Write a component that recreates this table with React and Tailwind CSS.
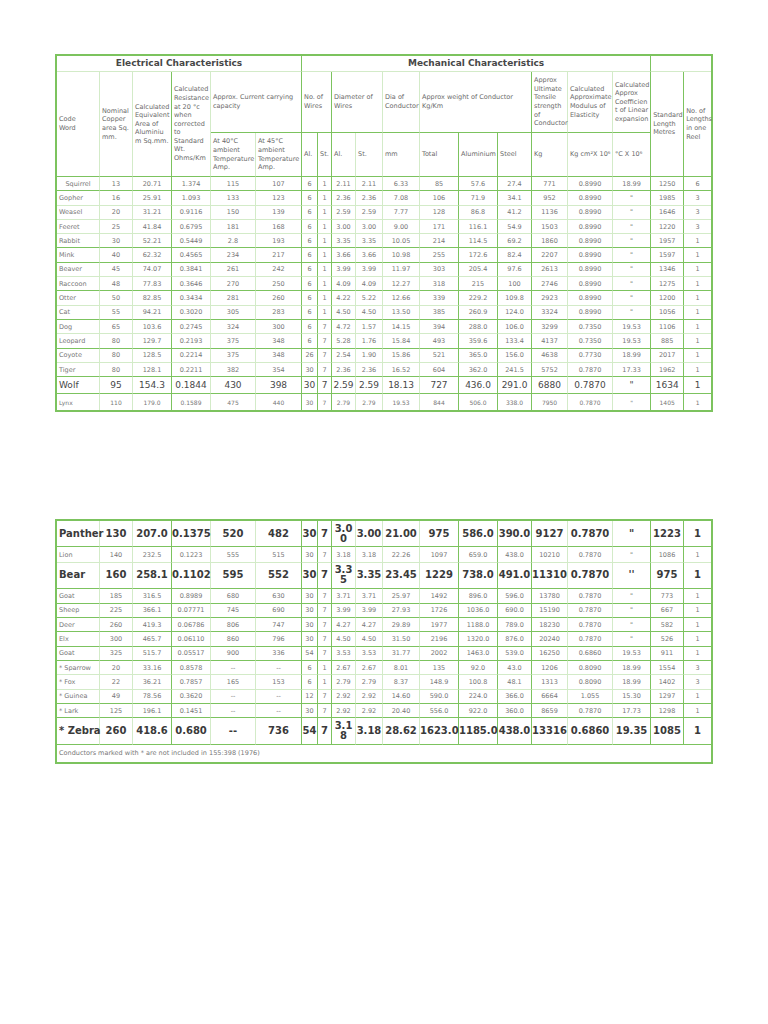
import React from "react";

const DARK_R = new Set([2, 5, 6, 7, 11, 12, 13, 16, 17]);
const WIDTHS = [43, 33, 39, 39, 45, 46, 16, 14, 24, 27, 37, 39, 39, 34, 36, 45, 38, 33, 27];

function bc(lastCol, bottom) {
  let c = "";
  if (lastCol !== 18) {
    c += DARK_R.has(lastCol) ? " border-r border-r-[#7cc35e]" : " border-r border-r-[#d3ebc8]";
  }
  if (bottom === "dark") c += " border-b border-b-[#7cc35e]";
  else if (bottom === "light") c += " border-b border-b-[#d3ebc8]";
  return c;
}

const topRows = [
  ["Squirrel", "13", "20.71", "1.374", "115", "107", "6", "1", "2.11", "2.11", "6.33", "85", "57.6", "27.4", "771", "0.8990", "18.99", "1250", "6"],
  ["Gopher", "16", "25.91", "1.093", "133", "123", "6", "1", "2.36", "2.36", "7.08", "106", "71.9", "34.1", "952", "0.8990", "\"", "1985", "3"],
  ["Weasel", "20", "31.21", "0.9116", "150", "139", "6", "1", "2.59", "2.59", "7.77", "128", "86.8", "41.2", "1136", "0.8990", "\"", "1646", "3"],
  ["Feeret", "25", "41.84", "0.6795", "181", "168", "6", "1", "3.00", "3.00", "9.00", "171", "116.1", "54.9", "1503", "0.8990", "\"", "1220", "3"],
  ["Rabbit", "30", "52.21", "0.5449", "2.8", "193", "6", "1", "3.35", "3.35", "10.05", "214", "114.5", "69.2", "1860", "0.8990", "\"", "1957", "1"],
  ["Mink", "40", "62.32", "0.4565", "234", "217", "6", "1", "3.66", "3.66", "10.98", "255", "172.6", "82.4", "2207", "0.8990", "\"", "1597", "1"],
  ["Beaver", "45", "74.07", "0.3841", "261", "242", "6", "1", "3.99", "3.99", "11.97", "303", "205.4", "97.6", "2613", "0.8990", "\"", "1346", "1"],
  ["Raccoon", "48", "77.83", "0.3646", "270", "250", "6", "1", "4.09", "4.09", "12.27", "318", "215", "100", "2746", "0.8990", "\"", "1275", "1"],
  ["Otter", "50", "82.85", "0.3434", "281", "260", "6", "1", "4.22", "5.22", "12.66", "339", "229.2", "109.8", "2923", "0.8990", "\"", "1200", "1"],
  ["Cat", "55", "94.21", "0.3020", "305", "283", "6", "1", "4.50", "4.50", "13.50", "385", "260.9", "124.0", "3324", "0.8990", "\"", "1056", "1"],
  ["Dog", "65", "103.6", "0.2745", "324", "300", "6", "7", "4.72", "1.57", "14.15", "394", "288.0", "106.0", "3299", "0.7350", "19.53", "1106", "1"],
  ["Leopard", "80", "129.7", "0.2193", "375", "348", "6", "7", "5.28", "1.76", "15.84", "493", "359.6", "133.4", "4137", "0.7350", "19.53", "885", "1"],
  ["Coyote", "80", "128.5", "0.2214", "375", "348", "26", "7", "2.54", "1.90", "15.86", "521", "365.0", "156.0", "4638", "0.7730", "18.99", "2017", "1"],
  ["Tiger", "80", "128.1", "0.2211", "382", "354", "30", "7", "2.36", "2.36", "16.52", "604", "362.0", "241.5", "5752", "0.7870", "17.33", "1962", "1"],
];
const topBottoms = ["dark", "light", "light", "light", "dark", "dark", "light", "dark", "light", "dark", "light", "dark", "light", "dark"];

const wolf = ["Wolf", "95", "154.3", "0.1844", "430", "398", "30", "7", "2.59", "2.59", "18.13", "727", "436.0", "291.0", "6880", "0.7870", "\"", "1634", "1"];
const lynx = ["Lynx", "110", "179.0", "0.1589", "475", "440", "30", "7", "2.79", "2.79", "19.53", "844", "506.0", "338.0", "7950", "0.7870", "\"", "1405", "1"];

const bottomRows = [
  { kind: "bold", h: "h-[26.3px]", b: "dark", c: ["Panther", "130", "207.0", "0.1375", "520", "482", "30", "7", ["3.0", "0"], "3.00", "21.00", "975", "586.0", "390.0", "9127", "0.7870", "\"", "1223", "1"] },
  { kind: "sm", h: "h-[15.4px]", b: "light", c: ["Lion", "140", "232.5", "0.1223", "555", "515", "30", "7", "3.18", "3.18", "22.26", "1097", "659.0", "438.0", "10210", "0.7870", "\"", "1086", "1"] },
  { kind: "bold", h: "h-[26.3px]", b: "dark", c: ["Bear", "160", "258.1", "0.1102", "595", "552", "30", "7", ["3.3", "5"], "3.35", "23.45", "1229", "738.0", "491.0", "11310", "0.7870", "''", "975", "1"] },
  { kind: "sm", h: "h-[14.37px]", b: "dark", c: ["Goat", "185", "316.5", "0.8989", "680", "630", "30", "7", "3.71", "3.71", "25.97", "1492", "896.0", "596.0", "13780", "0.7870", "\"", "773", "1"] },
  { kind: "sm", h: "h-[14.37px]", b: "dark", c: ["Sheep", "225", "366.1", "0.07771", "745", "690", "30", "7", "3.99", "3.99", "27.93", "1726", "1036.0", "690.0", "15190", "0.7870", "\"", "667", "1"] },
  { kind: "sm", h: "h-[14.37px]", b: "dark", c: ["Deer", "260", "419.3", "0.06786", "806", "747", "30", "7", "4.27", "4.27", "29.89", "1977", "1188.0", "789.0", "18230", "0.7870", "\"", "582", "1"] },
  { kind: "sm", h: "h-[14.37px]", b: "dark", c: ["Elx", "300", "465.7", "0.06110", "860", "796", "30", "7", "4.50", "4.50", "31.50", "2196", "1320.0", "876.0", "20240", "0.7870", "\"", "526", "1"] },
  { kind: "sm", h: "h-[14.37px]", b: "dark", c: ["Goat", "325", "515.7", "0.05517", "900", "336", "54", "7", "3.53", "3.53", "31.77", "2002", "1463.0", "539.0", "16250", "0.6860", "19.53", "911", "1"] },
  { kind: "sm", h: "h-[14.37px]", b: "light", c: ["* Sparrow", "20", "33.16", "0.8578", "--", "--", "6", "1", "2.67", "2.67", "8.01", "135", "92.0", "43.0", "1206", "0.8090", "18.99", "1554", "3"] },
  { kind: "sm", h: "h-[14.37px]", b: "light", c: ["* Fox", "22", "36.21", "0.7857", "165", "153", "6", "1", "2.79", "2.79", "8.37", "148.9", "100.8", "48.1", "1313", "0.8090", "18.99", "1402", "3"] },
  { kind: "sm", h: "h-[14.37px]", b: "dark", c: ["* Guinea", "49", "78.56", "0.3620", "--", "--", "12", "7", "2.92", "2.92", "14.60", "590.0", "224.0", "366.0", "6664", "1.055", "15.30", "1297", "1"] },
  { kind: "sm", h: "h-[14.37px]", b: "dark", c: ["* Lark", "125", "196.1", "0.1451", "--", "--", "30", "7", "2.92", "2.92", "20.40", "556.0", "922.0", "360.0", "8659", "0.7870", "17.73", "1298", "1"] },
  { kind: "bold", h: "h-[26.7px]", b: "dark", c: ["* Zebra", "260", "418.6", "0.680", "--", "736", "54", "7", ["3.1", "8"], "3.18", "28.62", "1623.0", "1185.0", "438.0", "13316", "0.6860", "19.35", "1085", "1"] },
];

const TXT = {
  sm: "text-[6.5px] leading-[8px] text-[#777777]",
  wolf: "text-[9px] leading-[11px] text-[#484848]",
  lynx: "text-[6px] leading-[7px] text-[#777777]",
  bold: "text-[10px] leading-[12px] font-bold text-[#3a3a3a]",
};

function DataRow({ cells, h, bottom, centerFirst }) {
  return (
    <tr className={h}>
      {cells.map((v, i) => {
        const first = i === 0;
        const align = first && !centerFirst ? "text-left pl-[2px]" : "text-center";
        return (
          <td key={i} className={`${bc(i, bottom)} ${align} p-0 whitespace-nowrap overflow-visible`}>
            {Array.isArray(v) ? (
              <span className="block leading-[10px]">
                {v[0]}
                <br />
                {v[1]}
              </span>
            ) : (
              v
            )}
          </td>
        );
      })}
    </tr>
  );
}

function H({ lines, colSpan, rowSpan, lastCol, bottom = "dark", className = "" }) {
  return (
    <td
      colSpan={colSpan}
      rowSpan={rowSpan}
      className={`${bc(lastCol, bottom)} p-0 pl-[2px] text-left align-middle whitespace-nowrap ${className}`}
    >
      {lines.map((l, i) => (
        <React.Fragment key={i}>
          {i > 0 && <br />}
          {l}
        </React.Fragment>
      ))}
    </td>
  );
}

function ColGroup() {
  return (
    <colgroup>
      {WIDTHS.map((w, i) => (
        <col key={i} style={{ width: w }} />
      ))}
    </colgroup>
  );
}

export default function App() {
  return (
    <div className="min-h-[1024px] w-[768px] bg-white pt-[54px] font-['DejaVu_Sans','Verdana',sans-serif]">
      <table className="ml-[55px] w-[658px] table-fixed border-separate border-spacing-0 border-2 border-[#7cc35e]">
        <ColGroup />
        <tbody>
          <tr className="h-[16px]">
            <td colSpan={6} className={`${bc(5, "light")} p-0 text-center text-[9px] font-bold text-[#474747]`}>
              Electrical Characteristics
            </td>
            <td colSpan={11} className={`${bc(16, "light")} p-0 text-center text-[9px] font-bold text-[#474747]`}>
              Mechanical Characteristics
            </td>
            <td colSpan={2} className={`${bc(18, "light")} p-0`}></td>
          </tr>
          <tr className="h-[61px] text-[6.5px] leading-[8.6px] text-[#6a6a6a]">
            <H rowSpan={2} lastCol={0} lines={["Code", "Word"]} />
            <H rowSpan={2} lastCol={1} lines={["Nominal", "Copper", "area Sq.", "mm."]} />
            <H rowSpan={2} lastCol={2} lines={["Calculated", "Equivalent", "Area of", "Aluminiu", "m Sq.mm."]} />
            <H rowSpan={2} lastCol={3} lines={["Calculated", "Resistance", "at 20 \u00b0c", "when", "corrected", "to", "Standard", "Wt.", "Ohms/Km"]} />
            <H colSpan={2} lastCol={5} lines={["Approx. Current carrying", "capacity"]} />
            <H colSpan={2} lastCol={7} lines={["No. of", "Wires"]} />
            <H colSpan={2} lastCol={9} lines={["Diameter of", "Wires"]} />
            <H lastCol={10} lines={["Dia of", "Conductor"]} />
            <H colSpan={3} lastCol={13} lines={["Approx weight of Conductor", "Kg/Km"]} />
            <H lastCol={14} lines={["Approx", "Ultimate", "Tensile", "strength", "of", "Conductor"]} />
            <H lastCol={15} lines={["Calculated", "Approximate", "Modulus of", "Elasticity"]} />
            <H lastCol={16} lines={["Calculated", "Approx", "Coefficien", "t of Linear", "expansion"]} />
            <H rowSpan={2} lastCol={17} lines={["Standard", "Length", "Metres"]} />
            <H rowSpan={2} lastCol={18} lines={["No. of", "Lengths", "in one", "Reel"]} />
          </tr>
          <tr className="h-[44px] text-[6.5px] leading-[8.6px] text-[#6a6a6a]">
            <H lastCol={4} lines={["At 40\u00b0C", "ambient", "Temperature", "Amp."]} />
            <H lastCol={5} lines={["At 45\u00b0C", "ambient", "Temperature", "Amp."]} />
            <H lastCol={6} lines={["Al."]} />
            <H lastCol={7} lines={["St."]} />
            <H lastCol={8} lines={["Al."]} />
            <H lastCol={9} lines={["St."]} />
            <H lastCol={10} lines={["mm"]} />
            <H lastCol={11} lines={["Total"]} />
            <H lastCol={12} lines={["Aluminium"]} />
            <H lastCol={13} lines={["Steel"]} />
            <H lastCol={14} lines={["Kg"]} />
            <H lastCol={15} lines={["Kg cm\u00b2X 10\u2076"]} />
            <H lastCol={16} lines={["\u00b0C X 10\u2076"]} />
          </tr>
        </tbody>
        <tbody className={TXT.sm}>
          {topRows.map((r, i) => (
            <DataRow key={i} cells={r} h="h-[14.3px]" bottom={topBottoms[i]} centerFirst={i === 0} />
          ))}
        </tbody>
        <tbody className={TXT.wolf}>
          <DataRow cells={wolf} h="h-[17px]" bottom="dark" />
        </tbody>
        <tbody className={TXT.lynx}>
          <DataRow cells={lynx} h="h-[16px]" bottom="none" />
        </tbody>
      </table>

      <table className="ml-[55px] mt-[107px] w-[658px] table-fixed border-separate border-spacing-0 border-2 border-[#7cc35e]">
        <ColGroup />
        {bottomRows.map((r, i) => (
          <tbody key={i} className={TXT[r.kind]}>
            <DataRow cells={r.c} h={r.h} bottom={r.b} />
          </tbody>
        ))}
        <tbody>
          <tr className="h-[16.7px]">
            <td colSpan={19} className="p-0 pl-[2px] text-left text-[6.5px] leading-[8px] text-[#777777] whitespace-nowrap">
              Conductors marked with * are not included in 155:398 (1976)
            </td>
          </tr>
        </tbody>
      </table>
    </div>
  );
}
